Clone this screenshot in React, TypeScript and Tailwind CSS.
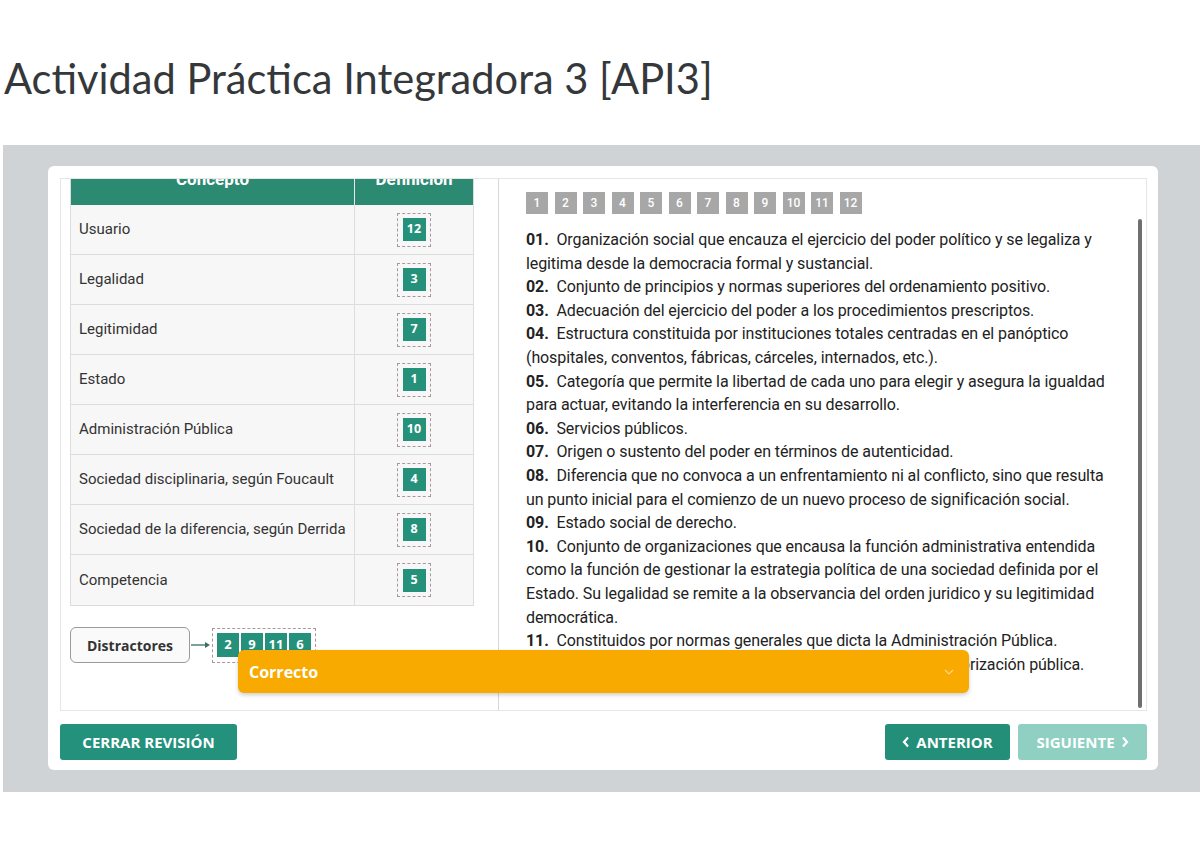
import React from "react";

const rows: [string, string][] = [
  ["Usuario", "12"],
  ["Legalidad", "3"],
  ["Legitimidad", "7"],
  ["Estado", "1"],
  ["Administración Pública", "10"],
  ["Sociedad disciplinaria, según Foucault", "4"],
  ["Sociedad de la diferencia, según Derrida", "8"],
  ["Competencia", "5"],
];

const defs: [string, string][] = [
  ["01.", "Organización social que encauza el ejercicio del poder político y se legaliza y legitima desde la democracia formal y sustancial."],
  ["02.", "Conjunto de principios y normas superiores del ordenamiento positivo."],
  ["03.", "Adecuación del ejercicio del poder a los procedimientos prescriptos."],
  ["04.", "Estructura constituida por instituciones totales centradas en el panóptico (hospitales, conventos, fábricas, cárceles, internados, etc.)."],
  ["05.", "Categoría que permite la libertad de cada uno para elegir y asegura la igualdad para actuar, evitando la interferencia en su desarrollo."],
  ["06.", "Servicios públicos."],
  ["07.", "Origen o sustento del poder en términos de autenticidad."],
  ["08.", "Diferencia que no convoca a un enfrentamiento ni al conflicto, sino que resulta un punto inicial para el comienzo de un nuevo proceso de significación social."],
  ["09.", "Estado social de derecho."],
  ["10.", "Conjunto de organizaciones que encausa la función administrativa entendida como la función de gestionar la estrategia política de una sociedad definida por el Estado. Su legalidad se remite a la observancia del orden juridico y su legitimidad democrática."],
  ["11.", "Constituidos por normas generales que dicta la Administración Pública."],
  ["12.", "Quien recibe los servicios del Estado a partir de una categorización pública."],
];

const roboto = { fontFamily: "Roboto, 'Liberation Sans', sans-serif" };
const open = { fontFamily: "'Open Sans', 'Liberation Sans', sans-serif" };

function Badge({ n }: { n: string }) {
  return (
    <div className="w-[34px] h-[34px] border-[1.5px] border-dashed border-[#a8979c] flex items-center justify-center">
      <div
        className="w-[23px] h-[23px] bg-[#25917b] text-white text-[12.5px] font-bold flex items-center justify-center"
        style={open}
      >
        {n}
      </div>
    </div>
  );
}

export default function App() {
  return (
    <div className="w-[1200px] h-[848px] bg-white relative overflow-hidden">
      <h1
        className="pt-[50px] pl-[4px] h-[145px] text-[41.6px] leading-[56px] text-[#35383b]"
        style={{ fontFamily: "Lato, 'Liberation Sans', sans-serif" }}
      >
        Actividad Práctica Integradora 3 [API3]
      </h1>
      <div className="ml-[3px] h-[647px] bg-[#d0d3d6] pt-[21px] pl-[45px] pr-[42px]">
        <div className="bg-white rounded-md h-[604px] pt-[12px] pl-[12px] pr-[11px] flex flex-col">
          <div className="h-[533px] border border-[#e6e6e6] flex">
            {/* left column */}
            <div className="w-[438px] border-r border-[#d8d8d8] overflow-hidden shrink-0">
              <div className="-mt-[25px] pl-[9px]">
                <div className="w-[404px] border border-[#dcdcdc]" style={roboto}>
                  <div className="flex h-[50px] bg-[#2d8a72] text-white font-bold text-[17px]">
                    <div className="w-[284px] border-r border-[#e8e8e8] flex items-center justify-center">Concepto</div>
                    <div className="flex-1 flex items-center justify-center">Definición</div>
                  </div>
                  {rows.map(([c, n], i) => (
                    <div
                      key={c}
                      className={`flex h-[50px] bg-[#f7f7f7] ${i < rows.length - 1 ? "border-b border-[#dddddd]" : ""}`}
                    >
                      <div className="w-[284px] border-r border-[#dddddd] flex items-center pl-[8px] text-[15px] text-[#333]">
                        {c}
                      </div>
                      <div className="flex-1 flex items-center justify-center">
                        <Badge n={n} />
                      </div>
                    </div>
                  ))}
                </div>
                <div className="mt-[21px] flex items-center">
                  <div
                    className="w-[120px] h-[36px] border border-[#9a9a9a] rounded-md bg-[#fafafa] flex items-center justify-center text-[14px] font-bold text-[#333]"
                    style={open}
                  >
                    Distractores
                  </div>
                  <svg width="22" height="10" viewBox="0 0 22 10">
                    <line x1="1" y1="5" x2="17" y2="5" stroke="#3c6f62" strokeWidth="1.3" />
                    <path d="M15 2 L20 5 L15 8 Z" fill="#3c6f62" />
                  </svg>
                  <div className="h-[35px] border-[1.5px] border-dashed border-[#a8979c] flex items-center gap-[2px] px-[4px]">
                    {["2", "9", "11", "6"].map((n) => (
                      <div
                        key={n}
                        className="w-[22px] h-[24px] bg-[#25917b] text-white text-[13px] font-bold flex items-center justify-center"
                        style={open}
                      >
                        {n}
                      </div>
                    ))}
                  </div>
                </div>
              </div>
            </div>
            {/* right column */}
            <div className="flex-1 flex pl-[27px] pr-[4px]">
              <div className="flex-1 pt-[13px]" style={roboto}>
                <div className="flex gap-[6.5px]">
                  {Array.from({ length: 12 }, (_, i) => (
                    <div
                      key={i}
                      className="w-[22px] h-[22px] bg-[#a7a7a7] text-white text-[12px] font-medium flex items-center justify-center"
                    >
                      {i + 1}
                    </div>
                  ))}
                </div>
                <div className="mt-[14px] pr-[26px] text-[16px] leading-[23.6px] text-[#222] tracking-[-0.1px]">
                  {defs.map(([k, t]) => (
                    <p key={k}>
                      <b className="font-bold">{k}</b>{"\u00a0 " + t}
                    </p>
                  ))}
                </div>
              </div>
              <div className="w-[4px] bg-[#6f6f6f] rounded-full mt-[40px] mb-[2px]" />
            </div>
          </div>
          <div className="mt-[13px] flex justify-between" style={open}>
            <div className="w-[177px] h-[36px] bg-[#23917b] rounded-[3px] text-white font-bold text-[15px] flex items-center justify-center">
              CERRAR REVISIÓN
            </div>
            <div className="flex gap-[8px]">
              <div className="w-[125px] h-[36px] bg-[#238f79] rounded-[3px] text-white font-bold text-[15px] flex items-center justify-center gap-[6px]">
                <svg width="8" height="12" viewBox="0 0 8 12">
                  <path d="M6 1.5 L2 6 L6 10.5" fill="none" stroke="white" strokeWidth="2.2" />
                </svg>
                ANTERIOR
              </div>
              <div className="w-[129px] h-[36px] bg-[#8fd0c3] rounded-[3px] text-white font-bold text-[15px] flex items-center justify-center gap-[6px]">
                SIGUIENTE
                <svg width="8" height="12" viewBox="0 0 8 12">
                  <path d="M2 1.5 L6 6 L2 10.5" fill="none" stroke="white" strokeWidth="2.2" />
                </svg>
              </div>
            </div>
          </div>
        </div>
      </div>
      {/* toast overlay */}
      <div
        className="absolute left-[238px] top-[650px] w-[731px] h-[43px] bg-[#f8aa00] rounded-[6px] shadow-[0_2px_4px_rgba(0,0,0,0.2)] flex items-center justify-between pl-[11px] pr-[15px]"
        style={open}
      >
        <span className="text-white font-bold text-[16px]">Correcto</span>
        <svg width="10" height="6" viewBox="0 0 10 6">
          <path d="M1 1 L5 5 L9 1" fill="none" stroke="#fcd98a" strokeWidth="1.2" />
        </svg>
      </div>
    </div>
  );
}
